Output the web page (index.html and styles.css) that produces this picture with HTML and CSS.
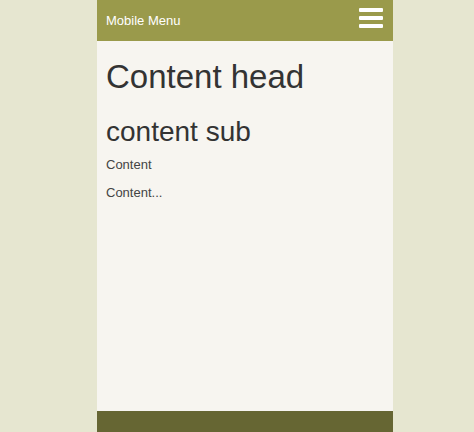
FILE: index.html
```html
<!DOCTYPE html>
<html lang="en">
<head>
<meta charset="utf-8">
<title>Mobile Menu</title>
<link rel="stylesheet" href="styles.css">
</head>
<body>
<div class="page">
  <header class="topbar">
    <span class="brand">Mobile Menu</span>
    <svg class="burger" width="24" height="20" viewBox="0 0 24 20" aria-hidden="true">
      <rect x="0" y="0" width="24" height="4" rx="1" fill="#ffffff"/>
      <rect x="0" y="8" width="24" height="4" rx="1" fill="#ffffff"/>
      <rect x="0" y="16" width="24" height="4" rx="1" fill="#ffffff"/>
    </svg>
  </header>
  <main class="content">
    <h1 class="head">Content head</h1>
    <h2 class="sub">content sub</h2>
    <p class="text first">Content</p>
    <p class="text second">Content...</p>
  </main>
  <footer class="foot"></footer>
</div>
</body>
</html>
```

FILE: styles.css
```css
html, body {
  margin: 0;
  padding: 0;
  height: 100%;
}
body {
  background: #e6e6d0;
  font-family: "Liberation Sans", Arial, sans-serif;
  color: #333333;
}
.page {
  margin-left: 97px;
  width: 296px;
  height: 100%;
  display: flex;
  flex-direction: column;
  background: #f7f5f0;
}
.topbar {
  height: 41px;
  flex: 0 0 41px;
  background: #9a9a4b;
  display: flex;
  justify-content: space-between;
  align-items: flex-start;
  padding: 0 10px 0 9px;
  box-sizing: border-box;
}
.brand {
  color: #ffffff;
  font-size: 13px;
  line-height: 15px;
  margin-top: 13px;
}
.burger {
  display: block;
  margin-top: 8px;
}
.content {
  flex: 1 1 auto;
  padding: 17px 9px 0 9px;
  display: flex;
  flex-direction: column;
  align-items: flex-start;
}
.head {
  margin: 0 0 20px 0;
  font-size: 33px;
  line-height: 38px;
  font-weight: normal;
  color: #333333;
}
.sub {
  margin: 0 0 9px 0;
  font-size: 28px;
  line-height: 32px;
  font-weight: normal;
  color: #333333;
}
.text {
  margin: 0;
  font-size: 13px;
  line-height: 15px;
  color: #444444;
}
.second {
  margin-top: 13px;
}
.foot {
  flex: 0 0 21px;
  height: 21px;
  background: #666633;
}
```
